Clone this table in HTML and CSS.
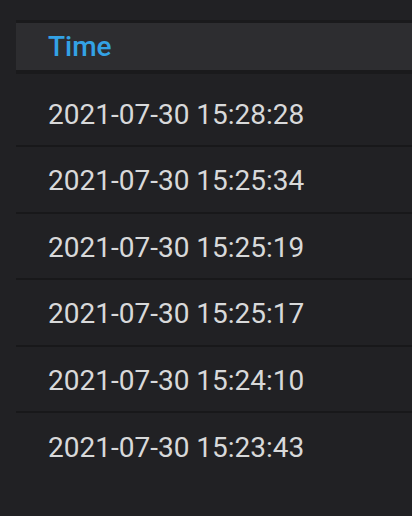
FILE: index.html
```html
<!DOCTYPE html>
<html>
<head>
<meta charset="utf-8">
<link rel="stylesheet" href="styles.css">
</head>
<body>
<div class="panel">
  <div class="table">
    <div class="header"><span class="th">Time</span></div>
    <div class="body">
      <div class="row">2021-07-30 15:28:28</div>
      <div class="row">2021-07-30 15:25:34</div>
      <div class="row">2021-07-30 15:25:19</div>
      <div class="row">2021-07-30 15:25:17</div>
      <div class="row">2021-07-30 15:24:10</div>
      <div class="row last">2021-07-30 15:23:43</div>
    </div>
  </div>
</div>
</body>
</html>
```
FILE: styles.css
```css
html, body {
  margin: 0;
  padding: 0;
  background: #212124;
  height: 100%;
  overflow: hidden;
}
.panel {
  padding: 20px 0 0 16px;
  font-family: Roboto, "Liberation Sans", sans-serif;
  font-size: 28px;
}
.table {
  display: flex;
  flex-direction: column;
}
.header {
  height: 47px;
  background: #2d2d30;
  border-top: 3px solid #1a1a1c;
  border-bottom: 4px solid #1a1a1c;
  display: flex;
  align-items: center;
  padding-left: 32px;
}
.th {
  color: #33a2e5;
  font-weight: 500;
}
.body {
  padding-top: 6.5px;
  display: flex;
  flex-direction: column;
}
.row {
  height: 64.5px;
  box-sizing: border-box;
  height: 66.5px;
  padding-top: 3px;
  border-bottom: 2px solid #18181a;
  display: flex;
  align-items: center;
  padding-left: 32px;
  color: #d8d9da;
}
.row.last {
  border-bottom: none;
}
```
